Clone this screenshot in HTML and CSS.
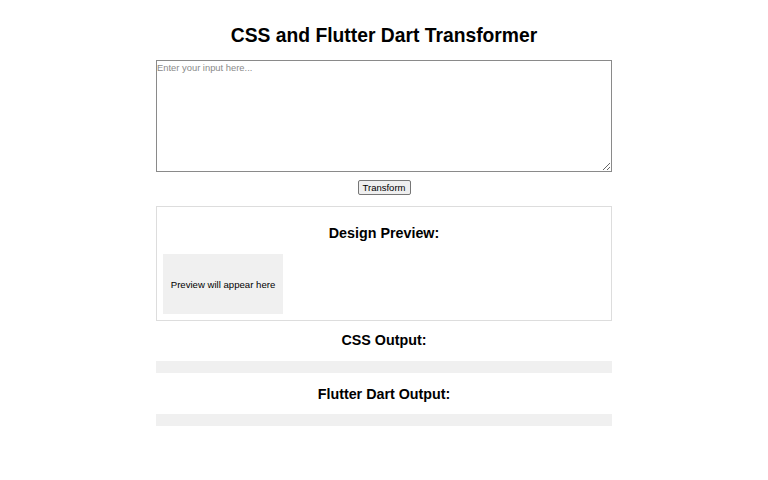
FILE: index.html
```html
<!DOCTYPE html>
<html lang="en">
<head>
<meta charset="utf-8">
<title>CSS and Flutter Dart Transformer</title>
<link rel="stylesheet" href="styles.css">
</head>
<body>
<div class="container">
  <h1 class="title">CSS and Flutter Dart Transformer</h1>
  <textarea class="input" placeholder="Enter your input here..."></textarea>
  <div class="actions"><button class="btn">Transform</button></div>
  <div class="preview-box">
    <h3 class="heading preview-heading">Design Preview:</h3>
    <div class="preview">Preview will appear here</div>
  </div>
  <h3 class="heading first">CSS Output:</h3>
  <pre class="output"></pre>
  <h3 class="heading">Flutter Dart Output:</h3>
  <pre class="output"></pre>
</div>
</body>
</html>
```
FILE: styles.css
```css
html, body {
  margin: 0;
  padding: 0;
  background: #fff;
}
body {
  font-family: "Liberation Sans", Arial, sans-serif;
  color: #000;
}
.container {
  width: 456px;
  margin: 0 auto;
  display: flex;
  flex-direction: column;
}
.title {
  font-size: 19.3px;
  line-height: 24px;
  font-weight: bold;
  text-align: center;
  margin: 24px 0 12px;
}
.input {
  box-sizing: border-box;
  width: 456px;
  height: 112px;
  border: 1px solid #8a8a8a;
  padding: 1px 0;
  margin: 0;
  font-family: "Liberation Sans", Arial, sans-serif;
  font-size: 9.4px;
  resize: vertical;
}
.input::placeholder {
  color: #8a8a8a;
}
.actions {
  display: flex;
  justify-content: center;
  margin-top: 8px;
}
.btn {
  box-sizing: border-box;
  width: 53px;
  height: 15px;
  padding: 0;
  font-family: "Liberation Sans", Arial, sans-serif;
  font-size: 9.5px;
  line-height: 13px;
  color: #000;
  background: #efefef;
  border: 1px solid #767676;
  border-radius: 2px;
}
.preview-box {
  margin-top: 11px;
  border: 1px solid #ddd;
  padding: 6px;
}
.heading {
  font-size: 14.3px;
  line-height: 18px;
  font-weight: bold;
  text-align: center;
  margin: 12px 0 11px;
}
.preview-heading {
  margin: 11px 0 12px;
}
.heading.first {
  margin: 10px 0 12px;
}
.preview {
  width: 120px;
  height: 60px;
  background: #f0f0f0;
  display: flex;
  align-items: center;
  justify-content: center;
  font-size: 9.6px;
}
.output {
  margin: 0;
  height: 12px;
  background: #f0f0f0;
}
```
